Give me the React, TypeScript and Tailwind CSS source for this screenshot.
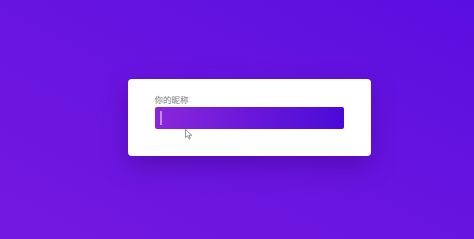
import React from "react";

export default function App() {
  return (
    <div className="w-[474px] h-[239px] bg-gradient-to-tr from-[#7418e0] via-[#6814e0] to-[#5a0ee0] flex items-center justify-center font-['Noto_Sans','Noto_Sans_CJK_SC',sans-serif]">
      {/* Card */}
      <div className="w-[243px] h-[77px] bg-white rounded-[4px] shadow-[0_10px_24px_rgba(60,0,130,0.45)] pl-[27px] pt-[15px] ml-[24px] -mt-[4px]">
        <label className="block text-[8.5px] leading-[11px] text-[#7a7a7a]">
          你的昵称
        </label>
        <div className="relative mt-[2px] w-[189px] h-[22px] rounded-[2px] bg-gradient-to-r from-[#8a26da] via-[#6a16da] to-[#4a08d8]">
          <div className="absolute left-[5px] top-[4px] w-[2px] h-[14px] bg-[#c490f0]" />
          {/* mouse pointer */}
          <svg
            className="absolute left-[30px] top-[22px]"
            width="8"
            height="11"
            viewBox="0 0 8 11"
          >
            <path
              d="M0.5 0.5 L0.5 8.5 L2.5 6.8 L4 10 L5.3 9.4 L3.9 6.3 L6.8 6.3 Z"
              fill="#ffffff"
              stroke="#777777"
              strokeWidth="0.8"
            />
          </svg>
        </div>
      </div>
    </div>
  );
}
